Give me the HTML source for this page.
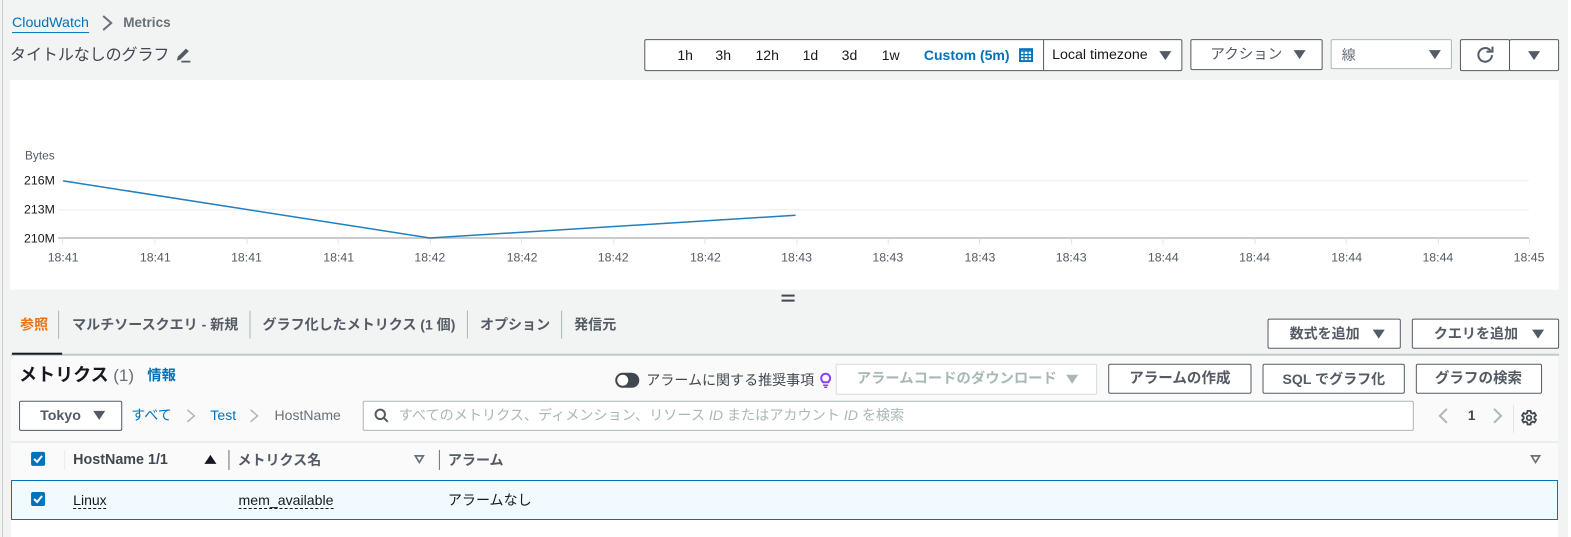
<!DOCTYPE html>
<html><head><meta charset="utf-8">
<style>
html,body{margin:0;padding:0;background:#fff;}
#p{position:relative;width:1571px;height:537px;overflow:hidden;background:#fff;font-family:"Liberation Sans","Noto Sans CJK JP",sans-serif;font-size:13px;color:#16191f;}
#p div,#p svg{position:absolute;}
#s{left:0;top:0;width:1568px;height:536px;transform:scale(1.002);transform-origin:0 0;}
.t{white-space:nowrap;line-height:16px;}
.b{box-sizing:border-box;border:1px solid #545b64;border-radius:2px;background:#fff;}
.tri{width:0;height:0;border-left:6px solid transparent;border-right:6px solid transparent;border-top:9px solid #545b64;}
.tl{font-size:12.300px;color:#545b64;transform:translateX(-50%);white-space:nowrap;line-height:14px;}
.sep{width:1px;background:#aab7b8;}
.tab{font-size:14px;font-weight:700;color:#545b64;white-space:nowrap;line-height:18px;}
.cb{width:14px;height:14px;background:#0073bb;border-radius:2px;}
</style></head><body>
<div id="p">
<div style="left:0;top:0;width:1568px;height:537px;background:#f2f3f3"></div>
<div style="left:2px;top:0;width:1px;height:537px;background:#c6cccc"></div>
<div style="left:11px;top:356px;width:1547px;height:181px;background:#fafafa"></div>
<div style="left:11px;top:441px;width:1547px;height:2px;background:#eaeded"></div>
<div style="left:11px;top:520px;width:1547px;height:17px;background:#fff"></div>
<div style="left:11px;top:480px;width:1547px;height:40px;box-sizing:border-box;border:1px solid #0073bb;background:#f1faff"></div>
<div id="s">

<!-- breadcrumb -->
<div class="t" style="left:12px;top:15px;font-size:14.200px;color:#0073bb;border-bottom:1px solid #0073bb;height:17px">CloudWatch</div>
<svg style="left:101px;top:15px" width="12" height="16" viewBox="0 0 12 16"><path d="M2 1l8 7-8 7" fill="none" stroke="#687078" stroke-width="2"/></svg>
<div class="t" style="left:123px;top:15px;font-size:13.500px;font-weight:700;color:#687078">Metrics</div>
<div class="t" style="left:10px;top:46px;font-size:16px;line-height:20px;color:#414750;letter-spacing:-.1px">タイトルなしのグラフ</div>
<svg style="left:175px;top:47px" width="16" height="16" viewBox="0 0 16 16"><path d="M2.500 9.500L10.500 1.500 13.500 4 5 12.500 1.500 13.500z" fill="#545b64"/><path d="M6 14.500h9" stroke="#545b64" stroke-width="1.800"/></svg>

<!-- time range -->
<div class="b" style="left:643px;top:39px;width:537px;height:32px"></div>
<div style="left:1041px;top:40px;width:1px;height:30px;background:#545b64"></div>
<div class="t" style="left:676px;top:47px;font-size:14px">1h</div>
<div class="t" style="left:714px;top:47px;font-size:14px">3h</div>
<div class="t" style="left:754px;top:47px;font-size:14px">12h</div>
<div class="t" style="left:801px;top:47px;font-size:14px">1d</div>
<div class="t" style="left:840px;top:47px;font-size:14px">3d</div>
<div class="t" style="left:880px;top:47px;font-size:14px">1w</div>
<div class="t" style="left:922px;top:47px;font-size:14px;font-weight:700;color:#0073bb">Custom (5m)</div>
<svg style="left:1017px;top:48px" width="14" height="14" viewBox="0 0 14 14"><rect x="0" y="0" width="14" height="14" fill="#0073bb"/><rect x="2" y="2" width="10" height="10" fill="#fff"/><path d="M2 2h10v1.500H2z" fill="#0073bb"/><path d="M2 6.500h10M2 9.500h10M5 3v9M9 3v9" stroke="#0073bb" stroke-width="1.200"/></svg>
<div class="t" style="left:1050px;top:47px;font-size:14.200px">Local timezone</div>
<div class="tri" style="left:1157px;top:51px"></div>

<div class="b" style="left:1188px;top:39px;width:132px;height:31px"></div>
<div class="t" style="left:1208px;top:47px;font-size:14.500px;color:#545b64">アクション</div>
<div class="tri" style="left:1291px;top:50px"></div>

<div class="b" style="left:1328px;top:39px;width:121px;height:30px;border-color:#aab7b8"></div>
<div class="t" style="left:1339px;top:47px;font-size:14px;color:#687078">線</div>
<div class="tri" style="left:1426px;top:50px"></div>

<div class="b" style="left:1457px;top:39px;width:50px;height:32px"></div>
<div class="b" style="left:1506px;top:39px;width:50px;height:32px"></div>
<svg style="left:1474px;top:46px" width="17" height="17" viewBox="0 0 17 17"><path d="M13.500 4.500A6.800 6.800 0 1 0 15 9" fill="none" stroke="#545b64" stroke-width="2"/><path d="M9.500 5.500h6v-5" fill="none" stroke="#545b64" stroke-width="2"/></svg>
<div class="tri" style="left:1525px;top:51px"></div>

<!-- graph panel -->
<div style="left:10px;top:80px;width:1546px;height:209px;background:#fff"></div>
<div class="t" style="left:25px;top:148px;font-size:11.800px;color:#545b64;line-height:14px">Bytes</div>
<div class="t" style="left:24px;top:173px;font-size:12.300px;line-height:14px">216M</div>
<div class="t" style="left:24px;top:202px;font-size:12.300px;line-height:14px">213M</div>
<div class="t" style="left:24px;top:231px;font-size:12.300px;line-height:14px">210M</div>
<svg style="left:0;top:170px" width="1571" height="90" viewBox="0 170 1571 90">
<path d="M58 180.500H1526M58 209.500H1526" stroke="#ececec" stroke-width="1"/>
<path d="M58 237.500H1526" stroke="#cbcbcb" stroke-width="2"/>
<path d="M62.500 238v6M154.500 238v6M246.500 238v6M337.500 238v6M429.500 238v6M520.500 238v6M612.500 238v6M703.500 238v6M795.500 238v6M886.500 238v6M977.500 238v6M1069.500 238v6M1160.500 238v6M1252.500 238v6M1343.500 238v6M1435.500 238v6M1526.500 238v6" stroke="#e3e3e3" stroke-width="1"/>
<path d="M63 180.500L429 237.500 794 214.800" fill="none" stroke="#1f7fbf" stroke-width="1.500"/>
</svg>
<div class="tl" style="left:63px;top:250px">18:41</div>
<div class="tl" style="left:155px;top:250px">18:41</div>
<div class="tl" style="left:246px;top:250px">18:41</div>
<div class="tl" style="left:338px;top:250px">18:41</div>
<div class="tl" style="left:429px;top:250px">18:42</div>
<div class="tl" style="left:521px;top:250px">18:42</div>
<div class="tl" style="left:612px;top:250px">18:42</div>
<div class="tl" style="left:704px;top:250px">18:42</div>
<div class="tl" style="left:795px;top:250px">18:43</div>
<div class="tl" style="left:886px;top:250px">18:43</div>
<div class="tl" style="left:978px;top:250px">18:43</div>
<div class="tl" style="left:1069px;top:250px">18:43</div>
<div class="tl" style="left:1161px;top:250px">18:44</div>
<div class="tl" style="left:1252px;top:250px">18:44</div>
<div class="tl" style="left:1344px;top:250px">18:44</div>
<div class="tl" style="left:1435px;top:250px">18:44</div>
<div class="tl" style="left:1526px;top:250px">18:45</div>

<!-- drag handle -->
<div style="left:780px;top:294px;width:13px;height:2px;background:#414750"></div>
<div style="left:780px;top:299px;width:13px;height:2px;background:#414750"></div>

<!-- tabs -->
<div class="tab" style="left:20px;top:315px;color:#ec7211">参照</div>
<div class="sep" style="left:58px;top:310px;height:28px"></div>
<div class="tab" style="left:72px;top:315px">マルチソースクエリ - 新規</div>
<div class="sep" style="left:249px;top:310px;height:28px"></div>
<div class="tab" style="left:262px;top:315px">グラフ化したメトリクス (1 個)</div>
<div class="sep" style="left:466px;top:310px;height:28px"></div>
<div class="tab" style="left:479px;top:315px">オプション</div>
<div class="sep" style="left:560px;top:310px;height:28px"></div>
<div class="tab" style="left:573px;top:315px">発信元</div>

<div class="b" style="left:1265px;top:318px;width:133px;height:30px"></div>
<div class="t" style="left:1287px;top:325px;font-size:14px;font-weight:700;color:#545b64">数式を追加</div>
<div class="tri" style="left:1370px;top:329px"></div>
<div class="b" style="left:1409px;top:318px;width:147px;height:30px"></div>
<div class="t" style="left:1431px;top:325px;font-size:14px;font-weight:700;color:#545b64">クエリを追加</div>
<div class="tri" style="left:1529px;top:329px"></div>

<div style="left:11px;top:353px;width:1545px;height:2px;background:#c3cbcb"></div>
<div style="left:12px;top:352px;width:50px;height:2px;background:#16191f"></div>

<!-- metrics panel -->
<div class="t" style="left:19px;top:363px;font-size:18px;line-height:22px;font-weight:700">メトリクス</div>
<div class="t" style="left:113px;top:365px;font-size:17px;line-height:20px;color:#687078">(1)</div>
<div class="t" style="left:147px;top:367px;font-size:14.300px;font-weight:700;color:#0073bb">情報</div>

<div style="left:614px;top:372px;width:24px;height:15px;border-radius:8px;background:#414750"></div>
<div style="left:616px;top:374px;width:11px;height:11px;border-radius:50%;background:#fff"></div>
<div class="t" style="left:645px;top:371px;font-size:14px;color:#414750">アラームに関する推奨事項</div>
<svg style="left:817px;top:371px" width="14" height="17" viewBox="0 0 14 17"><path d="M4.500 10.500C3.500 9.500 2.500 8.500 2.500 6.500a4.500 4.500 0 0 1 9 0c0 2-1 3-2 4z" fill="none" stroke="#8a3ffc" stroke-width="2"/><path d="M4.500 13.500h5M5.500 15.500h3" stroke="#8a3ffc" stroke-width="1.500"/></svg>

<div class="b" style="left:834px;top:363px;width:261px;height:31px;border-color:#d5dbdb"></div>
<div class="t" style="left:855px;top:370px;font-size:14.300px;font-weight:700;color:#aab7b8">アラームコードのダウンロード</div>
<div class="tri" style="left:1064px;top:374px;border-top-color:#aab7b8"></div>
<div class="b" style="left:1106px;top:363px;width:143px;height:30px"></div>
<div class="t" style="left:1127px;top:370px;font-size:14.500px;font-weight:700;color:#545b64">アラームの作成</div>
<div class="b" style="left:1260px;top:363px;width:142px;height:30px"></div>
<div class="t" style="left:1280px;top:370px;font-size:14px;font-weight:700;color:#545b64">SQL でグラフ化</div>
<div class="b" style="left:1413px;top:363px;width:126px;height:30px"></div>
<div class="t" style="left:1432px;top:370px;font-size:14.500px;font-weight:700;color:#545b64">グラフの検索</div>

<div class="b" style="left:19px;top:400px;width:103px;height:30px"></div>
<div class="t" style="left:40px;top:407px;font-size:14.200px;font-weight:700;color:#545b64">Tokyo</div>
<div class="tri" style="left:93px;top:410px"></div>
<div class="t" style="left:131px;top:406px;font-size:14px;color:#0073bb">すべて</div>
<svg style="left:185px;top:407px" width="12" height="16" viewBox="0 0 12 16"><path d="M2 2l7 6-7 6" fill="none" stroke="#aab7b8" stroke-width="1.500"/></svg>
<div class="t" style="left:210px;top:406px;font-size:14px;color:#0073bb">Test</div>
<svg style="left:248px;top:407px" width="12" height="16" viewBox="0 0 12 16"><path d="M2 2l7 6-7 6" fill="none" stroke="#aab7b8" stroke-width="1.500"/></svg>
<div class="t" style="left:274px;top:406px;font-size:14px;color:#687078">HostName</div>

<div class="b" style="left:362px;top:400px;width:1049px;height:30px;border-color:#aab7b8"></div>
<svg style="left:373px;top:407px" width="16" height="16" viewBox="0 0 16 16"><circle cx="6.500" cy="6.500" r="4.700" fill="none" stroke="#545b64" stroke-width="2"/><path d="M10 10l4 4" stroke="#545b64" stroke-width="2"/></svg>
<div class="t" style="left:398px;top:406px;font-size:14.100px;color:#aab7b8">すべてのメトリクス、ディメンション、リソース <i>ID</i> またはアカウント <i>ID</i> を検索</div>

<svg style="left:1434px;top:407px" width="12" height="16" viewBox="0 0 12 16"><path d="M10 1L3 8l7 7" fill="none" stroke="#aab7b8" stroke-width="2"/></svg>
<div class="t" style="left:1465px;top:407px;font-size:13.500px;font-weight:700;color:#414750">1</div>
<svg style="left:1489px;top:407px" width="12" height="16" viewBox="0 0 12 16"><path d="M2 1l7 7-7 7" fill="none" stroke="#aab7b8" stroke-width="2"/></svg>
<div style="left:1510px;top:404px;width:1px;height:28px;background:#e3e6e6"></div>
<svg style="left:1518px;top:409px" width="16" height="16" viewBox="0 0 16 16"><circle cx="8" cy="8" r="2.300" fill="none" stroke="#414750" stroke-width="1.800"/><path d="M6.500 1h3l.4 2 1.600.8 1.900-.8 1.500 2.600-1.500 1.300v1.800l1.500 1.300-1.500 2.600-1.900-.8-1.600.8-.4 2h-3l-.4-2-1.600-.8-1.900.8L1.100 10.200l1.500-1.300V7.100L1.100 5.800l1.500-2.600 1.900.8 1.600-.8z" fill="none" stroke="#414750" stroke-width="1.800"/></svg>

<!-- table head -->
<div class="cb" style="left:31px;top:451px"></div>
<svg style="left:31px;top:451px" width="14" height="14" viewBox="0 0 14 14"><path d="M3 7l3 3 5-6" fill="none" stroke="#fff" stroke-width="2"/></svg>
<div style="left:64px;top:449px;width:1px;height:20px;background:#eaeded"></div>
<div class="t" style="left:73px;top:451px;font-size:14.300px;font-weight:700;color:#414750">HostName 1/1</div>
<div style="left:204px;top:454px;width:0;height:0;border-left:6px solid transparent;border-right:6px solid transparent;border-bottom:9px solid #16191f"></div>
<div style="left:228px;top:449px;width:1px;height:20px;background:#687078"></div>
<div class="t" style="left:237px;top:451px;font-size:14px;font-weight:700;color:#545b64">メトリクス名</div>
<svg style="left:413px;top:454px" width="11" height="9" viewBox="0 0 11 9"><path d="M1.500 1h8L5.500 7.500z" fill="none" stroke="#687078" stroke-width="1.700"/></svg>
<div style="left:438px;top:449px;width:1px;height:20px;background:#687078"></div>
<div class="t" style="left:447px;top:451px;font-size:14px;font-weight:700;color:#545b64">アラーム</div>
<svg style="left:1527px;top:454px" width="11" height="9" viewBox="0 0 11 9"><path d="M1.500 1h8L5.500 7.500z" fill="none" stroke="#687078" stroke-width="1.700"/></svg>

<!-- selected row -->
<div class="cb" style="left:31px;top:491px"></div>
<svg style="left:31px;top:491px" width="14" height="14" viewBox="0 0 14 14"><path d="M3 7l3 3 5-6" fill="none" stroke="#fff" stroke-width="2"/></svg>
<div class="t" style="left:73px;top:491px;font-size:14px;border-bottom:1px dashed #16191f;height:16px">Linux</div>
<div class="t" style="left:238px;top:491px;font-size:14.100px;border-bottom:1px dashed #16191f;height:16px">mem_available</div>
<div class="t" style="left:447px;top:491px;font-size:14px">アラームなし</div>
</div>
</div>
</body></html>
